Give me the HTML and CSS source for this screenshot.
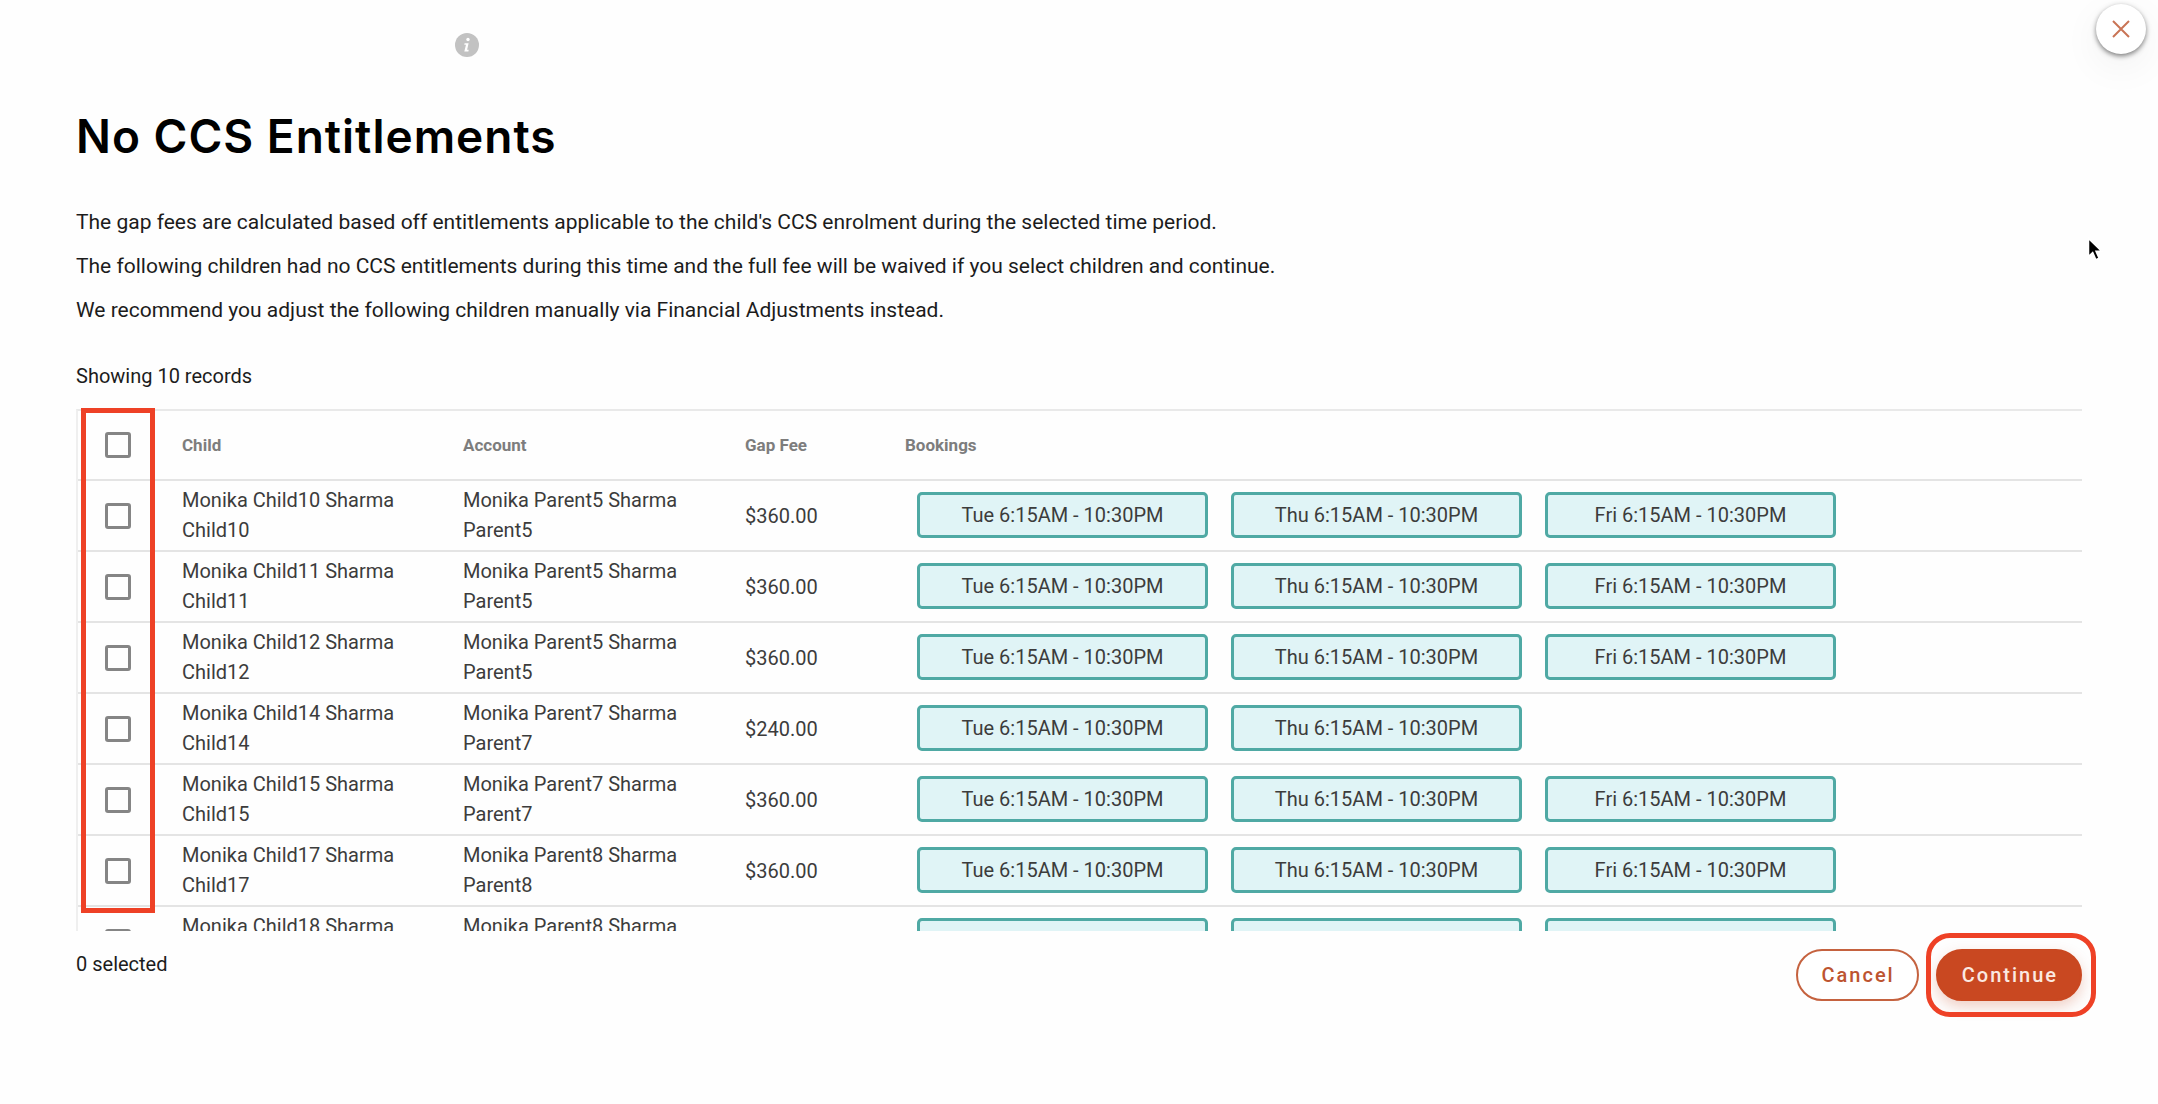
FILE: index.html
```html
<!DOCTYPE html>
<html lang="en">
<head>
<meta charset="utf-8">
<title>No CCS Entitlements</title>
<link rel="stylesheet" href="styles.css">
</head>
<body>
<main class="dialog">
  <div class="dialog-top">
    <svg class="info" viewBox="0 0 24 24" role="img" aria-label="Information"><circle cx="12" cy="12" r="12" fill="#c2c2c2"/><circle cx="13" cy="6.5" r="1.7" fill="#fff"/><path d="M9.6 10.2h4l-1.5 6.6h1.6l-.3 1.6H9.3l1.7-6.7H9.300z" fill="#fff"/></svg>
  </div>
  <h1 class="title">No CCS Entitlements</h1>
  <div class="intro">
    <p>The gap fees are calculated based off entitlements applicable to the child's CCS enrolment during the selected time period.</p>
    <p>The following children had no CCS entitlements during this time and the full fee will be waived if you select children and continue.</p>
    <p>We recommend you adjust the following children manually via Financial Adjustments instead.</p>
  </div>
  <p class="count">Showing 10 records</p>
  <section class="records">
    <div class="scroller">
      <table class="table">
        <colgroup><col class="col-check"><col class="col-child"><col class="col-account"><col class="col-fee"><col></colgroup>
        <thead>
          <tr><th class="check"><input type="checkbox" aria-label="Select all"></th><th>Child</th><th>Account</th><th>Gap Fee</th><th>Bookings</th></tr>
        </thead>
        <tbody>
          <tr><td class="check"><input type="checkbox" aria-label="Select Child10"></td><td>Monika Child10 Sharma Child10</td><td>Monika Parent5 Sharma Parent5</td><td class="fee">$360.00</td><td><div class="chips"><span class="chip">Tue 6:15AM - 10:30PM</span><span class="chip">Thu 6:15AM - 10:30PM</span><span class="chip">Fri 6:15AM - 10:30PM</span></div></td></tr>
          <tr><td class="check"><input type="checkbox" aria-label="Select Child11"></td><td>Monika Child11 Sharma Child11</td><td>Monika Parent5 Sharma Parent5</td><td class="fee">$360.00</td><td><div class="chips"><span class="chip">Tue 6:15AM - 10:30PM</span><span class="chip">Thu 6:15AM - 10:30PM</span><span class="chip">Fri 6:15AM - 10:30PM</span></div></td></tr>
          <tr><td class="check"><input type="checkbox" aria-label="Select Child12"></td><td>Monika Child12 Sharma Child12</td><td>Monika Parent5 Sharma Parent5</td><td class="fee">$360.00</td><td><div class="chips"><span class="chip">Tue 6:15AM - 10:30PM</span><span class="chip">Thu 6:15AM - 10:30PM</span><span class="chip">Fri 6:15AM - 10:30PM</span></div></td></tr>
          <tr><td class="check"><input type="checkbox" aria-label="Select Child14"></td><td>Monika Child14 Sharma Child14</td><td>Monika Parent7 Sharma Parent7</td><td class="fee">$240.00</td><td><div class="chips"><span class="chip">Tue 6:15AM - 10:30PM</span><span class="chip">Thu 6:15AM - 10:30PM</span></div></td></tr>
          <tr><td class="check"><input type="checkbox" aria-label="Select Child15"></td><td>Monika Child15 Sharma Child15</td><td>Monika Parent7 Sharma Parent7</td><td class="fee">$360.00</td><td><div class="chips"><span class="chip">Tue 6:15AM - 10:30PM</span><span class="chip">Thu 6:15AM - 10:30PM</span><span class="chip">Fri 6:15AM - 10:30PM</span></div></td></tr>
          <tr><td class="check"><input type="checkbox" aria-label="Select Child17"></td><td>Monika Child17 Sharma Child17</td><td>Monika Parent8 Sharma Parent8</td><td class="fee">$360.00</td><td><div class="chips"><span class="chip">Tue 6:15AM - 10:30PM</span><span class="chip">Thu 6:15AM - 10:30PM</span><span class="chip">Fri 6:15AM - 10:30PM</span></div></td></tr>
          <tr><td class="check"><input type="checkbox" aria-label="Select Child18"></td><td>Monika Child18 Sharma Child18</td><td>Monika Parent8 Sharma Parent8</td><td class="fee">$360.00</td><td><div class="chips"><span class="chip">Tue 6:15AM - 10:30PM</span><span class="chip">Thu 6:15AM - 10:30PM</span><span class="chip">Fri 6:15AM - 10:30PM</span></div></td></tr>
        </tbody>
      </table>
    </div>
    <div class="mark mark-checks"></div>
  </section>
  <footer class="footer">
    <span class="selected">0 selected</span>
    <div class="actions">
      <button type="button" class="btn btn-outline">Cancel</button>
      <div class="marked"><button type="button" class="btn btn-solid">Continue</button><div class="mark mark-continue"></div></div>
    </div>
  </footer>
</main>
<button type="button" class="close" aria-label="Close"><svg viewBox="0 0 18 18"><path d="M1 1l16 16M17 1L1 17" stroke="#c97455" stroke-width="2" fill="none"/></svg></button>
<svg class="cursor" viewBox="0 0 16 24"><path d="M1.500 1.500v18l4.200-4 3.200 7.200 3.200-1.400-3.100-7.100h5.600z" fill="#000" stroke="#fff" stroke-width="1.500"/></svg>
</body>
</html>
```
FILE: styles.css
```css
* { box-sizing: border-box; }

body {
  margin: 0;
  background: #fefefe;
  color: #1c1c1c;
  font: 20px/30px Roboto, "Liberation Sans", sans-serif;
}

p, h1 { margin: 0; }

.dialog {
  display: flex;
  flex-direction: column;
  height: 100vh;
  padding: 33px 76px 103px 76px;
}

.dialog-top {
  display: flex;
  padding-left: 379px;
}

.info { width: 24px; height: 24px; }

.title {
  margin-top: 47px;
  color: #000;
  font: 600 46px/64px Inter, Roboto, sans-serif;
  letter-spacing: 1px;
}

.intro {
  display: grid;
  gap: 14px;
  margin-top: 39px;
  font-size: 21px;
}

.count { margin-top: 36px; }

.records {
  position: relative;
  display: flex;
  flex: 1;
  min-height: 0;
  margin-top: 18px;
}

.scroller {
  flex: 1;
  overflow: auto;
  scrollbar-width: none;
  border-top: 2px solid #e9e9e9;
  border-left: 2px solid #efefef;
}

.table {
  width: 100%;
  table-layout: fixed;
  border-collapse: collapse;
  color: #3c3c3c;
}

.col-check { width: 86px; }
.col-child { width: 281px; }
.col-account { width: 282px; }
.col-fee { width: 160px; }

.table th,
.table td {
  height: 71px;
  padding: 0 40px 2px 18px;
  border-bottom: 2px solid #e4e4e4;
  text-align: left;
}

.table th {
  height: 69px;
  padding-bottom: 0;
  color: #7d7d7d;
  font-size: 17px;
  font-weight: 700;
}

.table .check { padding: 0 0 0 27px; }
.table .fee { padding-bottom: 0; }
.table td:last-child { padding-right: 0; }

.table input {
  display: block;
  width: 26px;
  height: 26px;
  margin: 0;
  appearance: none;
  border: 3px solid #858585;
  border-radius: 3px;
}

.chips {
  display: flex;
  gap: 23px;
  padding-left: 12px;
}

.chip {
  width: 291px;
  border: 3px solid #4fa9a4;
  border-radius: 5px;
  background: #e0f4f6;
  line-height: 40px;
  text-align: center;
}

.footer {
  display: flex;
  justify-content: space-between;
  padding-top: 18px;
}

.actions { display: flex; gap: 17px; }

.btn {
  display: block;
  height: 52px;
  padding: 0 22px 0 24px;
  border: 2px solid #c5623f;
  border-radius: 26px;
  background: #fff;
  color: #bd5430;
  font: 500 20px/24px Roboto, "Liberation Sans", sans-serif;
  letter-spacing: 2px;
}

.btn-solid {
  border-color: #c94821;
  background: #c94821;
  color: #fbe9e1;
  box-shadow: 0 6px 14px rgba(201, 72, 33, .25);
}

.marked { position: relative; }

.mark {
  position: absolute;
  border: 5px solid #ee4126;
  pointer-events: none;
}

.mark-checks { inset: -1px auto 18px 5px; width: 74px; }
.mark-continue { inset: -16px -14px -16px -10px; border-radius: 24px; }

.close {
  position: absolute;
  top: 4px;
  right: 12px;
  display: grid;
  place-items: center;
  width: 50px;
  height: 50px;
  padding: 0;
  border: 0;
  border-radius: 50%;
  background: #fff;
  box-shadow: 0 2px 5px rgba(0, 0, 0, .5), 0 12px 40px rgba(0, 0, 0, .06);
}

.close svg { width: 18px; height: 18px; }

.cursor {
  position: absolute;
  top: 237px;
  right: 55px;
  width: 16px;
  height: 24px;
}
```
